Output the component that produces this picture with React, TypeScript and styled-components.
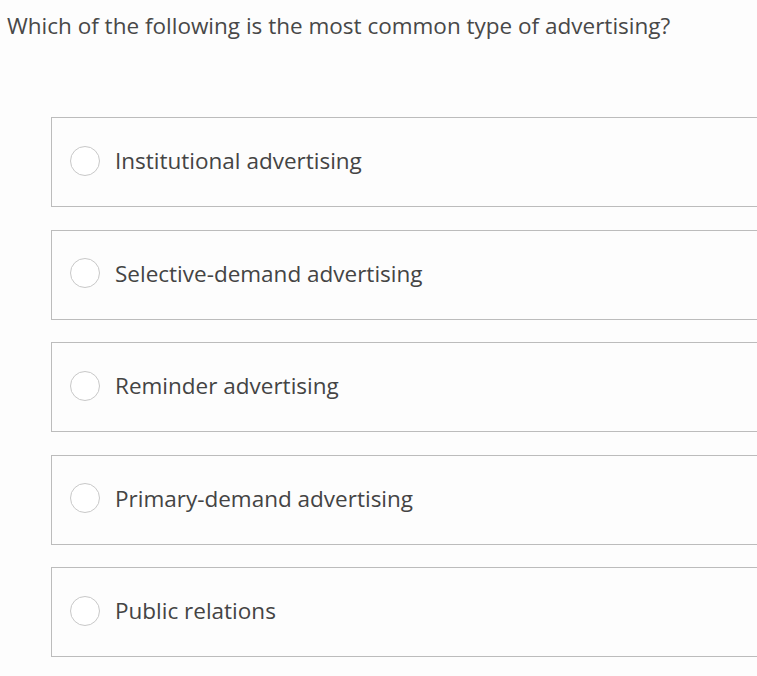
import React from "react";
import styled, { createGlobalStyle } from "styled-components";

const Global = createGlobalStyle`
  html, body { margin: 0; padding: 0; background: #fdfdfd; }
  body { font-family: "Open Sans", "Liberation Sans", sans-serif; color: #3c3c3c; }
`;

const Page = styled.div`
  padding: 10px 0 0 7px;
  overflow: hidden;
  width: 757px;
  box-sizing: border-box;
`;

const Question = styled.h1`
  margin: 0;
  font-size: 22.5px;
  font-weight: 400;
  line-height: 32px;
  color: #484848;
`;

const Options = styled.div`
  margin: 75px -20px 0 44px;
  display: flex;
  flex-direction: column;
  gap: 22.5px;
`;

const Option = styled.label`
  display: flex;
  align-items: center;
  height: 90px;
  box-sizing: border-box;
  border: 1px solid #bcbcbc;
  background: #fdfdfd;
  padding: 0 0 3px 18px;
  cursor: pointer;
`;

const Radio = styled.span`
  width: 30px;
  height: 30px;
  box-sizing: border-box;
  border-radius: 50%;
  border: 1px solid #c8c8c8;
  background: #fff;
  flex: none;
`;

const Label = styled.span`
  margin-left: 15px;
  font-size: 22.5px;
  color: #444;
`;

const options = [
  "Institutional advertising",
  "Selective-demand advertising",
  "Reminder advertising",
  "Primary-demand advertising",
  "Public relations",
];

export default function App() {
  return (
    <Page>
      <Global />
      <Question>Which of the following is the most common type of advertising?</Question>
      <Options>
        {options.map((o) => (
          <Option key={o}>
            <Radio />
            <Label>{o}</Label>
          </Option>
        ))}
      </Options>
    </Page>
  );
}
